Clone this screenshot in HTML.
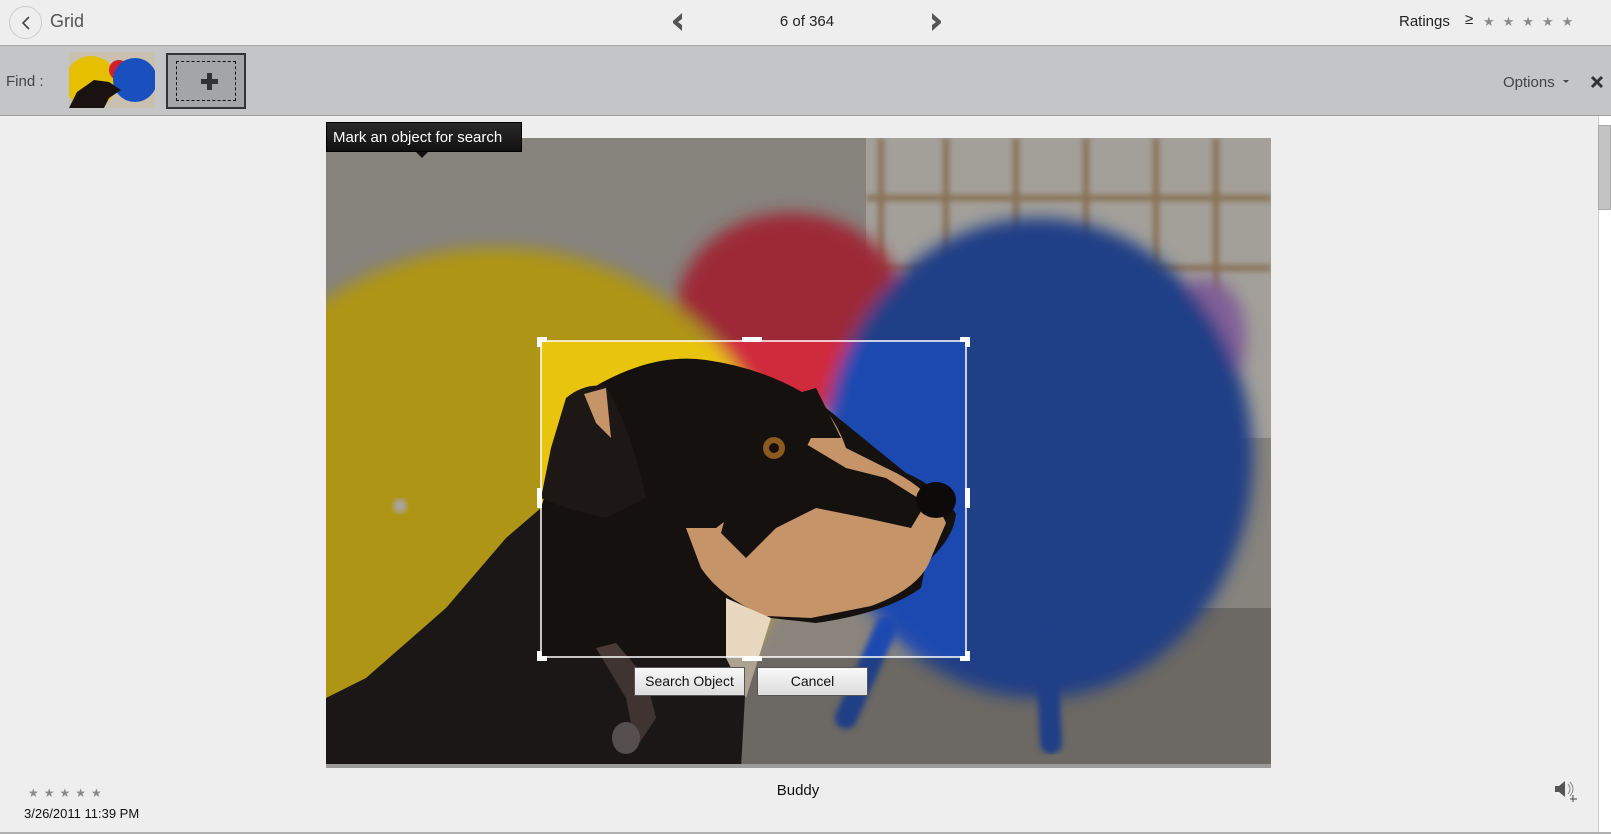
<!DOCTYPE html>
<html><head><meta charset="utf-8"><style>
*{margin:0;padding:0;box-sizing:border-box}
body{width:1611px;height:834px;background:#eeeeee;font-family:"Liberation Sans",sans-serif;position:relative;overflow:hidden;color:#222}
.abs{position:absolute}
#top{left:0;top:0;width:1611px;height:46px;background:#eeeeee;border-bottom:1px solid #a8a8a8}
#find{left:0;top:46px;width:1611px;height:70px;background:#c4c5c7;border-bottom:1px solid #a0a0a0}
.t{font-size:15px;white-space:nowrap}
.star{color:#8a8a8a;font-size:13px}
.btn{background:linear-gradient(#f8f8f8,#dcdcdc);border:1px solid #555;font-size:14px;text-align:center;line-height:27px;color:#111}
</style></head><body>
<div id="top" class="abs"></div>
<div class="abs" style="left:9px;top:6px;width:33px;height:33px;border:1px solid #ccc;border-radius:50%;background:#eee"></div>
<svg class="abs" style="left:19px;top:15px" width="14" height="16"><path d="M10 2 L4 8 L10 14" stroke="#444" stroke-width="1.6" fill="none"/></svg>
<div class="abs t" style="left:50px;top:11px;font-size:18px;color:#555">Grid</div>
<svg class="abs" style="left:670px;top:12px" width="16" height="20"><path d="M12 1 L3 9 L3 11 L12 19 L12 13 L8 10 L12 7Z" fill="#555"/></svg>
<svg class="abs" style="left:928px;top:12px" width="16" height="20"><path d="M4 1 L13 9 L13 11 L4 19 L4 13 L8 10 L4 7Z" fill="#555"/></svg>
<div class="abs t" style="left:760px;top:13px;width:94px;text-align:center;font-size:15px">6 of 364</div>
<div class="abs t" style="left:1399px;top:13px;font-size:15px">Ratings</div>
<div class="abs t" style="left:1465px;top:11px;font-size:15px">≥</div>
<div class="abs star" style="left:1483px;top:14px;letter-spacing:8px">★★★★★</div>
<div id="find" class="abs"></div>
<div class="abs t" style="left:6px;top:73px;font-size:15px;color:#444">Find :</div>
<svg class="abs" style="left:69px;top:52px" width="86" height="56">
<rect width="86" height="56" fill="#c9c0b0"/><circle cx="22" cy="30" r="26" fill="#e6c000"/><circle cx="50" cy="18" r="10" fill="#d02030"/><circle cx="66" cy="28" r="22" fill="#1a4fc0"/><path d="M0 56 L8 40 L25 28 L40 30 L52 38 L40 46 L35 56Z" fill="#1a1210"/></svg>
<div class="abs" style="left:166px;top:53px;width:80px;height:56px;background:#a4a5a7;border:2px solid #333"></div>
<div class="abs" style="left:176px;top:61px;width:60px;height:40px;border:1px dashed #111"></div>
<div class="abs" style="left:201px;top:79px;width:17px;height:5px;background:#333"></div>
<div class="abs" style="left:207px;top:73px;width:5px;height:17px;background:#333"></div>
<div class="abs t" style="left:1503px;top:74px;font-size:15px;color:#444">Options</div>
<div class="abs" style="left:1563px;top:80px;border:3px solid transparent;border-top:3px solid #444"></div>
<svg class="abs" style="left:1590px;top:75px" width="14" height="14"><path d="M2 2 L12 12 M12 2 L2 12" stroke="#333" stroke-width="3"/></svg>
<div class="abs" style="left:1598px;top:116px;width:13px;height:716px;background:#fff;border-left:1px solid #ccc"></div>
<div class="abs" style="left:1598px;top:125px;width:13px;height:85px;background:#c4c4c4;border:1px solid #aaa"></div>
<svg class="abs" style="left:326px;top:138px" width="945" height="630" viewBox="0 0 945 630">
<defs><filter id="b" x="-20%" y="-20%" width="140%" height="140%"><feGaussianBlur stdDeviation="8"/></filter>
<filter id="b2"><feGaussianBlur stdDeviation="3"/></filter></defs>
<rect width="945" height="630" fill="#b0aba3"/>
<rect x="540" y="0" width="405" height="300" fill="#d8d4cb"/>
<g stroke="#b39068" stroke-width="6" filter="url(#b2)"><line x1="555" y1="0" x2="555" y2="260"/><line x1="620" y1="0" x2="620" y2="200"/><line x1="690" y1="0" x2="690" y2="200"/><line x1="760" y1="0" x2="760" y2="200"/><line x1="830" y1="0" x2="830" y2="200"/><line x1="890" y1="0" x2="890" y2="260"/><line x1="540" y1="60" x2="945" y2="60"/><line x1="540" y1="130" x2="945" y2="130"/></g>
<rect x="0" y="470" width="945" height="160" fill="#8a847d"/>
<g filter="url(#b)">
<ellipse cx="465" cy="175" rx="115" ry="100" fill="#d02a3c"/>
<ellipse cx="170" cy="380" rx="290" ry="270" fill="#e8c410"/>
<ellipse cx="880" cy="200" rx="40" ry="60" fill="#a878c8"/>
<ellipse cx="712" cy="320" rx="215" ry="240" fill="#1c48b0"/>
</g>
<g stroke="#1c48b0" stroke-width="22" stroke-linecap="round" filter="url(#b2)"><line x1="560" y1="490" x2="520" y2="580"/><line x1="720" y1="500" x2="725" y2="605"/></g>
<circle cx="74" cy="368" r="7" fill="#ddd" filter="url(#b2)"/>
<path d="M0 630 L0 560 L40 540 L120 470 L180 400 L215 370 L230 320 L250 260 L275 245 Q330 215 380 222 Q450 232 500 270 L580 335 Q615 350 630 376 Q628 400 600 425 L595 450 Q560 475 490 485 L445 480 L420 540 L415 630 Z" fill="#15110f"/>
<path d="M485 255 Q510 280 520 310 L560 330 Q605 350 620 385 L605 420 Q595 450 545 468 L485 480 L440 478 Q395 460 375 430 L360 390 L390 390 L430 360 L470 330 L485 300 Z" fill="#c59469"/>
<path d="M455 260 L490 250 L515 300 L470 300Z" fill="#15110f"/>
<path d="M430 300 L470 300 L520 330 L560 340 L600 365 L585 390 L540 380 L490 370 L450 390 L420 420 L395 395 L410 340Z" fill="#15110f"/>
<path d="M400 460 L445 480 L420 560 L400 520Z" fill="#e8d8c0"/>
<path d="M240 260 Q258 245 280 248 Q305 290 320 360 L280 380 L240 370 L215 360 L225 310Z" fill="#1d1715"/>
<path d="M258 256 L280 250 L285 300 L270 285Z" fill="#c59469"/>
<circle cx="448" cy="310" r="11" fill="#8a5a20"/><circle cx="448" cy="310" r="5" fill="#1a0e05"/>
<ellipse cx="610" cy="362" rx="20" ry="18" fill="#0d0a09"/>
<path d="M270 510 L300 560 L310 610 L330 580 L320 540 L290 505Z" fill="#4a3a35"/>
<ellipse cx="300" cy="600" rx="14" ry="16" fill="#6a6060"/>
<path fill-rule="evenodd" fill="rgba(40,40,40,0.3)" d="M0 0 H945 V630 H0Z M215 203 H640 V519 H215Z"/>
<rect x="215" y="203" width="425" height="316" fill="none" stroke="#fff" stroke-width="1.5"/>
<g fill="#fff"><rect x="211" y="199" width="10" height="5"/><rect x="211" y="199" width="5" height="10"/><rect x="634" y="199" width="10" height="5"/><rect x="639" y="199" width="5" height="10"/><rect x="211" y="518" width="10" height="5"/><rect x="211" y="513" width="5" height="10"/><rect x="634" y="518" width="10" height="5"/><rect x="639" y="513" width="5" height="10"/><rect x="416" y="199" width="20" height="5"/><rect x="416" y="518" width="20" height="5"/><rect x="211" y="350" width="5" height="20"/><rect x="639" y="350" width="5" height="20"/></g>
<rect x="0" y="626" width="945" height="4" fill="#9a9a9a"/>
</svg>
<div class="abs t" style="left:326px;top:122px;width:196px;height:30px;background:linear-gradient(#2a2a2a,#111);color:#fff;font-size:15px;line-height:30px;padding-left:6px;border:1px solid #000">Mark an object for search</div>
<div class="abs" style="left:416px;top:152px;border:6px solid transparent;border-top:6px solid #111"></div>
<div class="abs btn" style="left:634px;top:667px;width:111px;height:29px">Search Object</div>
<div class="abs btn" style="left:757px;top:667px;width:111px;height:29px">Cancel</div>
<div class="abs star" style="left:28px;top:786px;letter-spacing:5px;font-size:12px">★★★★★</div>
<div class="abs t" style="left:24px;top:806px;font-size:13px;color:#111">3/26/2011 11:39 PM</div>
<div class="abs t" style="left:748px;top:782px;width:100px;text-align:center;font-size:15px;color:#111">Buddy</div>
<svg class="abs" style="left:1554px;top:779px" width="26" height="24"><path d="M1 7 H5 L11 2 V18 L5 13 H1Z" fill="#555"/><path d="M14 5 Q18 10 14 15 M16 3 Q22 10 16 17" stroke="#888" fill="none"/><path d="M19 16 V23 M16 20 H23" stroke="#444"/></svg>
<div class="abs" style="left:0;top:832px;width:1611px;height:2px;background:#b0b0b0"></div>
</body></html>
